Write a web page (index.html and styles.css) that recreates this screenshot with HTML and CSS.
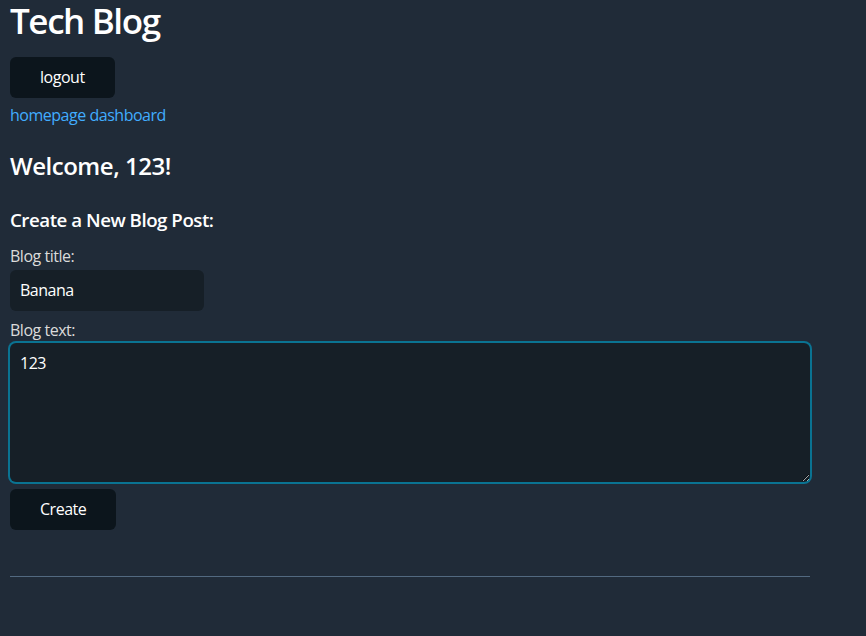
FILE: index.html
```html
<!DOCTYPE html>
<html lang="en">
<head>
<meta charset="utf-8">
<title>Tech Blog</title>
<link rel="stylesheet" href="styles.css">
</head>
<body>
<header class="site-header">
  <h1 class="site-title">Tech Blog</h1>
  <button class="btn" type="button">logout</button>
  <nav class="nav"><a href="#">homepage</a> <a href="#">dashboard</a></nav>
</header>
<main>
  <h2 class="welcome">Welcome, 123!</h2>
  <form class="post-form">
    <h3 class="form-title">Create a New Blog Post:</h3>
    <label class="field-label" for="title">Blog title:</label>
    <input class="text-input" id="title" type="text" value="Banana">
    <label class="field-label" for="body">Blog text:</label>
    <textarea class="text-area is-focused" id="body" autofocus>123</textarea>
    <button class="btn" type="submit">Create</button>
  </form>
  <hr class="divider">
</main>
</body>
</html>
```

FILE: styles.css
```css
html {
  background: #202b38;
}
body {
  margin: 0;
  padding: 0 10px;
  width: 800px;
  background: #202b38;
  color: #dbdbdb;
  font-family: "Open Sans", "Noto Sans", sans-serif;
  font-size: 16px;
  line-height: 1.4;
  letter-spacing: -0.03em;
}
h1, h2, h3 {
  color: #ffffff;
  font-weight: 600;
}
.site-title {
  margin: 0 0 17px;
  padding-top: 1px;
  font-size: 35px;
  line-height: 39px;
  letter-spacing: -0.04em;
}
.btn {
  display: block;
  margin: 0 0 6px;
  padding: 10px 30px;
  border: none;
  border-radius: 6px;
  background: #0c151c;
  color: #ffffff;
  font-family: inherit;
  font-size: 16px;
  line-height: 21px;
  letter-spacing: inherit;
}
.nav a {
  color: #41adff;
  text-decoration: none;
}
.welcome {
  margin: 23px 0 12px;
  font-size: 24px;
  line-height: 33.6px;
}
.post-form {
  margin: 0;
}
.form-title {
  margin: 24px 0 12px;
  font-size: 18.72px;
  line-height: 26.2px;
}
.field-label {
  display: block;
  margin-bottom: 2px;
}
.text-input,
.text-area {
  display: block;
  box-sizing: border-box;
  margin: 0 0 6px;
  padding: 10px;
  border: none;
  border-radius: 6px;
  background: #161f27;
  color: #ffffff;
  font-family: inherit;
  font-size: 16px;
  line-height: 21px;
  letter-spacing: inherit;
  outline: none;
  caret-color: #ffffff;
}
.text-input {
  width: 194px;
  margin-bottom: 8px;
}
.text-area {
  width: 800px;
  height: 139px;
  margin-bottom: 7px;
  resize: both;
}
.is-focused {
  box-shadow: 0 0 0 2px #0096bfab;
}
.divider {
  margin: 46px 0 0;
  border: none;
  border-top: 1px solid #526980;
}
```
